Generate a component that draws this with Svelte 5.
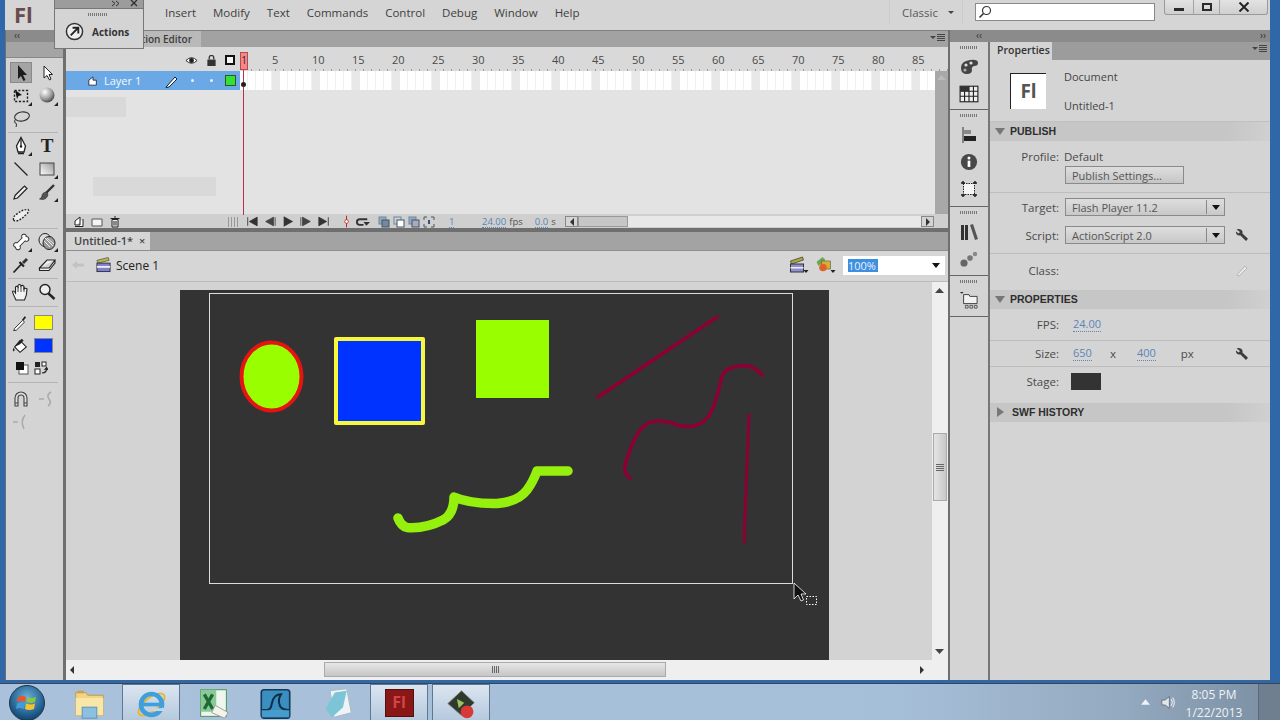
<script>
  const menus = ['Insert', 'Modify', 'Text', 'Commands', 'Control', 'Debug', 'Window', 'Help'];
  const labels = [5, 10, 15, 20, 25, 30, 35, 40, 45, 50, 55, 60, 65, 70, 75, 80, 85];
</script>

{#snippet wrench()}
  <svg class="wrench" viewBox="0 0 14 14"><path d="M1.5 1.5 Q5 0 7 2.5 Q8 4 7.4 5.4 L13 10.8 L11 13 L5.4 7.4 Q3 8 1.6 6.2 Q.6 4.6 1 3.6 L3.6 5.4 L5 4 Z" fill="#3c3c3c"/></svg>
{/snippet}

{#snippet grip()}
  <div class="grip"></div>
{/snippet}

<div class="screen">
  <div class="window">
    <header class="menubar">
      <span class="logo">Fl</span>
      <nav class="menus">
        {#each menus as m}<span>{m}</span>{/each}
      </nav>
      <div class="workspace"><span>Classic</span><i class="caret"></i></div>
      <div class="search">
        <svg viewBox="0 0 14 14"><circle cx="8.5" cy="5.5" r="4" fill="none" stroke="#333" stroke-width="1.2"/><path d="M5.5 8.5 L1.5 12.5" stroke="#333" stroke-width="1.6"/></svg>
      </div>
      <div class="winbtns">
        <span class="wb w1"><i class="min"></i></span>
        <span class="wb w2"><i class="max"></i></span>
        <span class="wb close">
          <svg viewBox="0 0 12 10"><path d="M1.5 .5 L10.5 9.5 M10.5 .5 L1.5 9.5" stroke="#222" stroke-width="2"/></svg>
        </span>
      </div>
    </header>

    <div class="body">
      <aside class="tools">
        <div class="dockbar"><span class="chev">‹‹</span></div>
        <div class="toolhead"></div>
        <div class="toolgrid">
          <span class="tool on"><svg viewBox="0 0 20 20"><path d="M7 2 V16 L10 13 L12.5 18 L14.5 17 L12 12 H16 Z" fill="#1c1c1c"/></svg></span>
          <span class="tool"><svg viewBox="0 0 20 20"><path d="M7 3 V15 L10 12.5 L12.5 17 L14 16 L12 11.5 H15.5 Z" fill="#fff" stroke="#222"/></svg></span>
          <span class="tool more"><svg viewBox="0 0 20 20"><rect x="3.5" y="4.5" width="13" height="11" fill="none" stroke="#222" stroke-width="1.4" stroke-dasharray="2.2 1.6"/><path d="M4 4 L11 9 L7.5 10 L6 13 Z" fill="#111"/></svg></span>
          <span class="tool more"><svg viewBox="0 0 20 20"><defs><radialGradient id="sph" cx=".35" cy=".3" r=".8"><stop offset="0" stop-color="#fff"/><stop offset=".6" stop-color="#999"/><stop offset="1" stop-color="#333"/></radialGradient></defs><circle cx="10" cy="9" r="7.5" fill="url(#sph)"/></svg></span>
          <span class="tool"><svg viewBox="0 0 20 20"><ellipse cx="11" cy="7.5" rx="7.5" ry="4.5" fill="none" stroke="#333" stroke-width="1.1" transform="rotate(-10 11 7.5)"/><path d="M4 11 Q2.5 14 5 14 Q6 16 5 18" fill="none" stroke="#333"/></svg></span>
          <span class="tool"></span>
          <span class="sep"></span>
          <span class="tool more"><svg viewBox="0 0 20 20"><path d="M10 1.5 L14.5 10 L13 16 H7 L5.5 10 Z" fill="#fff" stroke="#222" stroke-width="1.3"/><path d="M10 2 V10 M7 17.5 H13" stroke="#222" stroke-width="1.3"/><circle cx="10" cy="10.5" r="1.2" fill="#222"/></svg></span>
          <span class="tool"><span class="ttool">T</span></span>
          <span class="tool"><svg viewBox="0 0 20 20"><path d="M3.5 3.5 L16.5 16.5" stroke="#222" stroke-width="1.3"/></svg></span>
          <span class="tool more"><svg viewBox="0 0 20 20"><defs><linearGradient id="rc" x1="0" y1="1" x2="1" y2="0"><stop offset="0" stop-color="#fff"/><stop offset="1" stop-color="#999"/></linearGradient></defs><rect x="3" y="4" width="14" height="12" fill="url(#rc)" stroke="#444"/></svg></span>
          <span class="tool"><svg viewBox="0 0 20 20"><path d="M4 13.5 L13.5 4 L16 6.5 L6.5 16 L3 17 Z" fill="#eee" stroke="#222" stroke-width="1.2"/></svg></span>
          <span class="tool more"><svg viewBox="0 0 20 20"><path d="M17 3 L9.5 10.5" stroke="#333" stroke-width="2.4"/><path d="M9.5 10 Q5 10.5 5 14 Q4.5 16.5 2.5 17 Q8 18.5 10 15 Q11.5 13 10.5 11 Z" fill="#555" stroke="#222" stroke-width=".6"/></svg></span>
          <span class="tool"><svg viewBox="0 0 20 20"><path d="M2.5 15 Q2 11 6 9 Q11 4.5 17 4.5 Q19 6 15 9.5 Q11 14 7 15.5 Q4 16.5 2.5 15 Z" fill="#eee" stroke="#222" stroke-width="1.4" stroke-dasharray="1.8 1.4"/></svg></span>
          <span class="tool"></span>
          <span class="sep"></span>
          <span class="tool more"><svg viewBox="0 0 20 20"><path d="M6 14 L14 6" stroke="#222" stroke-width="5"/><circle cx="5" cy="13" r="2.4" fill="#fff" stroke="#222"/><circle cx="7" cy="15.5" r="2.4" fill="#fff" stroke="#222"/><circle cx="13" cy="4.5" r="2.4" fill="#fff" stroke="#222"/><circle cx="15.5" cy="7" r="2.4" fill="#fff" stroke="#222"/><path d="M5 15 L15 5" stroke="#fff" stroke-width="3.4"/></svg></span>
          <span class="tool more"><svg viewBox="0 0 20 20"><ellipse cx="8" cy="8" rx="6" ry="6.5" fill="#ddd" stroke="#222"/><ellipse cx="12" cy="11" rx="6" ry="6.5" fill="#999" stroke="#222"/><path d="M8 6 L16 14 M7 9 L13 15 M10 6 L17 12" stroke="#eee"/></svg></span>
          <span class="tool"><svg viewBox="0 0 20 20"><path d="M2.5 17.5 L11 8.5" stroke="#222" stroke-width="1.8"/><path d="M8.5 7 L13 11.5" stroke="#222" stroke-width="2.2"/><path d="M11 7 L15 3 L17 5 L13 9 Z" fill="#333"/></svg></span>
          <span class="tool"><svg viewBox="0 0 20 20"><path d="M2.5 13 L10 5 H18 L12 13 Z M2.5 13 V15.5 H12 L18 8 V5" fill="#eee" stroke="#222" stroke-width="1.1"/></svg></span>
          <span class="sep"></span>
          <span class="tool"><svg viewBox="0 0 20 20"><path d="M5 18 Q2 12 1.5 9.5 Q2.5 8 4.5 11 V5 Q6 3.5 7 5 V3.5 Q8.5 1.5 10 3.5 V4 Q11.5 2.5 13 4.5 V7 Q14.5 5.5 16 7 Q16 13 13.5 18 Z" fill="#f2f2f2" stroke="#222" stroke-width="1.1"/><path d="M7 5 V10 M10 4 V10 M13 5 V10" stroke="#222" stroke-width=".8"/></svg></span>
          <span class="tool"><svg viewBox="0 0 20 20"><circle cx="8" cy="7.5" r="5" fill="#eee" stroke="#222" stroke-width="1.4"/><path d="M11.5 11.5 L17.5 17" stroke="#222" stroke-width="2.4"/></svg></span>
          <span class="sep tall"></span>
          <span class="tool color"><svg class="mini" viewBox="0 0 20 20"><path d="M4 16 L13 7 L15 9 L6 18 L3 18.5 Z" fill="#fff" stroke="#222"/><path d="M13 7 L16 3" stroke="#222" stroke-width="2"/></svg><b class="swatch yellow"></b></span>
          <span class="tool color"><svg class="mini" viewBox="0 0 20 20"><path d="M10 4 L17 11 L10 17 L4 11 Z" fill="#fff" stroke="#222" stroke-width="1.2"/><path d="M4 11 L10 4 L12 2 L14 4 L10 8" fill="#222"/><path d="M3 12 Q1 15 3 16 Q5 15 3 12" fill="#222"/></svg><b class="swatch blue"></b></span>
          <span class="colorbtns">
            <svg viewBox="0 0 14 14"><rect x="4" y="4" width="9" height="9" fill="#fff" stroke="#555"/><rect x="1" y="1" width="8" height="8" fill="#111"/></svg>
            <svg viewBox="0 0 14 14"><rect x="1" y="1" width="5" height="5" fill="#222"/><rect x="1" y="8" width="5" height="5" fill="#fff" stroke="#222"/><rect x="8" y="1" width="4" height="4" fill="#fff" stroke="#222"/><path d="M8 12 Q13 12 12.5 7 M10.5 9 L12.5 6.5 L14 9" fill="none" stroke="#222" stroke-width="1.2"/></svg>
          </span>
          <span class="sep tall"></span>
          <span class="tool"><svg viewBox="0 0 20 20"><path d="M4 17 V9 A6 6 0 0 1 16 9 V17 H13 V9 A3 3 0 0 0 7 9 V17 Z" fill="#ddd" stroke="#444" stroke-width="1.1"/><path d="M4 14 H7 M13 14 H16" stroke="#444"/></svg></span>
          <span class="tool"><svg viewBox="0 0 20 20"><path d="M2 10 H7 M14 3 Q9 6 12 10 Q15 14 11 17" fill="none" stroke="#aaa" stroke-width="1.6"/></svg></span>
          <span class="tool"><svg viewBox="0 0 20 20"><path d="M2 10 H7 M14 3 Q9 9 13 17" fill="none" stroke="#aaa" stroke-width="1.6"/></svg></span>
        </div>
      </aside>

      <main class="center">
        <section class="timeline">
          <div class="panelbar">
            <span class="ptab">tion Editor</span>
            <span class="pmenu"><i class="caret small"></i><i class="lines"></i></span>
          </div>
          <div class="ruler">
            <div class="ruler-left">
              <svg viewBox="0 0 14 10"><path d="M1 5 Q7 -1 13 5 Q7 11 1 5 Z" fill="#fff" stroke="#222"/><circle cx="7" cy="5" r="2.6" fill="#222"/></svg>
              <svg viewBox="0 0 14 12"><rect x="2.5" y="5" width="9" height="7" fill="#333"/><path d="M4.5 5 V3 A2.5 2.5 0 0 1 9.5 3 V5" fill="none" stroke="#333" stroke-width="1.4"/></svg>
              <i class="outline"></i>
            </div>
            <div class="ruler-track">
              {#each labels as n}<span>{n}</span>{/each}
            </div>
          </div>
          <div class="layers">
            <div class="rows">
              <div class="layer">
                <div class="layer-info">
                  <svg class="lyicon" viewBox="0 0 12 12"><path d="M1 5 L6 1 V5 H10 V11 H1 Z" fill="#fff" stroke="#223"/></svg>
                  <span class="lyname">Layer 1</span>
                  <svg class="lypen" viewBox="0 0 14 14"><path d="M2 12 L10 3 L12 5 L4 13 L1 13.5 Z" fill="#fff" stroke="#123"/></svg>
                  <i class="dot d1"></i><i class="dot d2"></i>
                  <i class="lygreen"></i>
                </div>
                <div class="frames"></div>
              </div>
              <div class="blank">
                <div class="ghost g1"></div>
                <div class="ghost g2"></div>
              </div>
            </div>
            <div class="vscroll tl">
              <svg class="sarrow" viewBox="0 0 9 5"><path d="M4.5 0 L9 5 H0 Z" fill="#bbb"/></svg>
            </div>
          </div>
          <div class="tlbar">
            <div class="tlbar-left">
              <svg viewBox="0 0 12 12"><path d="M2 5 L7 1 V9 H2 Z M2 10.5 H10 V3" fill="#fff" stroke="#222"/></svg>
              <svg viewBox="0 0 12 12"><path d="M1 3 H11 V10 H1 Z" fill="#f4f4f4" stroke="#555"/></svg>
              <svg viewBox="0 0 12 12"><path d="M3 3.5 H9 V11 H3 Z M1.5 2.5 H10.5 M5 1 H7 M5 5 V9.5 M7 5 V9.5" fill="#eee" stroke="#222"/></svg>
            </div>
            <i class="tlgrip"></i>
            <div class="play">
              <svg viewBox="0 0 14 12"><path d="M2 1 V11 M13 1 V11 L4 6 Z" fill="#333" stroke="#333"/></svg>
              <svg viewBox="0 0 14 12"><path d="M11 1 V11 L2 6 Z M13 1 V11" fill="#444" stroke="#444"/></svg>
              <svg viewBox="0 0 14 12"><path d="M2 0 V12 L13 6 Z" fill="#333"/></svg>
              <svg viewBox="0 0 14 12"><path d="M3 1 V11 L12 6 Z M1 1 V11" fill="#444" stroke="#444"/></svg>
              <svg viewBox="0 0 14 12"><path d="M1 1 V11 L10 6 Z M12 1 V11" fill="#333" stroke="#333"/></svg>
            </div>
            <div class="onion">
              <svg class="redmark" viewBox="0 0 6 14"><path d="M3 0 V14" stroke="#c22" stroke-width="1.2"/><circle cx="3" cy="7" r="2.2" fill="#fff" stroke="#c22"/></svg>
              <svg class="loop" viewBox="0 0 16 10"><path d="M12 2 H4 Q1 2 1 5 Q1 8 4 8 H8" fill="none" stroke="#333" stroke-width="2"/><path d="M8 5 L15 5 L11 9 Z" fill="#333"/></svg>
              <svg viewBox="0 0 12 12"><rect x="1" y="1" width="7" height="7" fill="#9ab" stroke="#68a"/><rect x="4" y="4" width="7" height="7" fill="#789" stroke="#456"/></svg>
              <svg viewBox="0 0 12 12"><rect x="1" y="1" width="7" height="7" fill="none" stroke="#68a"/><rect x="4" y="4" width="7" height="7" fill="#fff" stroke="#456"/></svg>
              <svg viewBox="0 0 12 12"><rect x="1" y="1" width="7" height="7" fill="#9ab" stroke="#68a"/><rect x="4" y="4" width="7" height="7" fill="#aab" stroke="#456"/></svg>
              <svg viewBox="0 0 12 12"><path d="M1 4 V1 H4 M8 1 H11 V4 M11 8 V11 H8 M4 11 H1 V8" fill="none" stroke="#456"/><rect x="5" y="4" width="2" height="4" fill="#357"/></svg>
            </div>
            <span class="val frame">1</span>
            <span class="val fps">24.00</span><span class="unit">fps</span>
            <span class="val sec">0.0</span><span class="unit">s</span>
            <div class="hs mini-hs">
              <b class="hs-btn"><i class="tri left"></i></b>
              <b class="mini-thumb"></b>
              <b class="hs-btn end"><i class="tri right"></i></b>
            </div>
          </div>
          <div class="playhead"><span>1</span></div>
          <div class="playline"></div>
          <div class="playdot"></div>
        </section>

        <section class="document">
          <div class="doctabs">
            <div class="doctab">Untitled-1* <i>×</i></div>
          </div>
          <div class="scenebar">
            <svg class="back" viewBox="0 0 12 10"><path d="M0 5 L5 1 V3.5 H12 V6.5 H5 V9 Z" fill="#c2c2c2"/></svg>
            <svg class="clap" viewBox="0 0 16 16"><path d="M1 3 L13 0 L14 3 L2 6 Z" fill="#b9b94c" stroke="#444" stroke-width=".7"/><rect x="1" y="6" width="14" height="9" fill="#7f7fd0" stroke="#333"/><rect x="1" y="9" width="14" height="2" fill="#eee"/></svg>
            <span class="scene">Scene 1</span>
            <div class="sceneright">
              <svg class="sicon" viewBox="0 0 20 18"><path d="M2 5 L14 1 L15 4 L3 8 Z" fill="#a8a83c" stroke="#333" stroke-width=".7"/><rect x="2" y="8" width="13" height="8" fill="#8f8fd0" stroke="#333"/><rect x="2" y="11" width="13" height="1.5" fill="#eee"/><path d="M15 14 H20 L17.5 17 Z" fill="#222"/></svg>
              <svg class="sicon" viewBox="0 0 20 18"><path d="M1 6 L7 1 L10 4 L3 10 Z" fill="#6aa84f"/><rect x="6" y="5" width="9" height="8" fill="#d8b030" stroke="#555" stroke-width=".6"/><circle cx="7.5" cy="11.5" r="3.8" fill="#e0622a"/><path d="M15 14 H20 L17.5 17 Z" fill="#222"/></svg>
              <div class="zoom"><span>100%</span><i class="caret dark"></i></div>
            </div>
          </div>
          <div class="stagewrap">
            <div class="stagearea">
              <div class="pasteboard">
                <svg class="art" viewBox="180 290 649 370">
                  <rect x="209.5" y="293.5" width="583" height="290" fill="none" stroke="#dcdcdc" stroke-width="1"/>
                  <ellipse cx="271.5" cy="376.5" rx="30" ry="34" fill="#99ff00" stroke="#e61410" stroke-width="4"/>
                  <rect x="336" y="339" width="87" height="84" fill="#0033ff" stroke="#f8f83a" stroke-width="4" stroke-linejoin="round"/>
                  <rect x="476" y="320" width="73" height="78" fill="#99ff00"/>
                  <path d="M398 518 Q401 526 407 527.5 Q425 529 443 520 Q454 514 454 497 Q470 504 497 503.5 Q518 502 527 490 Q533 482 537 471 H568" fill="none" stroke="#96f00e" stroke-width="9.5" stroke-linecap="round" stroke-linejoin="round"/>
                  <g fill="none" stroke="#8c0033" stroke-width="3.6" stroke-linecap="round" stroke-linejoin="round">
                    <path d="M598 397 L717 317"/>
                    <path d="M630 478 Q624 474 625 466 Q630 445 640 430 Q648 421 657 421 Q668 421 677 425 Q690 428 697 425 Q708 422 714 405 Q719 391 722 376 Q726 367 740 366 Q755 365 762 375"/>
                    <path d="M749 415 L744 542" stroke-width="3"/>
                  </g>
                </svg>
              </div>
              <svg class="cursor" viewBox="0 0 26 24">
                <path d="M1 1 V17 L5 13 L8 19 L10.5 18 L8 12 H13 Z" fill="#111" stroke="#fff" stroke-width=".8"/>
                <rect x="13.5" y="14.5" width="10" height="8" fill="none" stroke="#fff" stroke-dasharray="1.5 1.5"/>
              </svg>
            </div>
            <div class="vscroll stage">
              <svg class="sarrow up" viewBox="0 0 9 5"><path d="M4.5 0 L9 5 H0 Z" fill="#444"/></svg>
              <div class="vthumb"><i></i></div>
              <svg class="sarrow down" viewBox="0 0 9 5"><path d="M0 0 H9 L4.5 5 Z" fill="#444"/></svg>
            </div>
          </div>
          <div class="hscroll">
            <i class="tri left"></i>
            <div class="hthumb"><i></i></div>
            <i class="tri right"></i>
          </div>
        </section>
      </main>

      <aside class="dock">
        <div class="dockbar wide"><span class="chev c1">‹‹</span><span class="chev c2">››</span></div>
        <div class="dockrow">
          <div class="strip">
            <div class="sgroup g68">
              {@render grip()}
              <svg class="dk" viewBox="0 0 20 18"><path d="M2 10 Q2 3 11 2 Q19 1 19 5 Q19 8 15 8 Q12 9 13 12 Q13 16 8 16 Q2 16 2 10 Z" fill="#444"/><circle cx="7" cy="7" r="1.6" fill="#ddd"/><circle cx="12" cy="5" r="1.6" fill="#ddd"/><circle cx="6" cy="12" r="1.6" fill="#aaa"/></svg>
              <svg class="dk" viewBox="0 0 18 16"><rect x="1" y="1" width="16" height="14" fill="#eee" stroke="#222"/><path d="M1 5.5 H17 M1 10 H17 M5 1 V15 M9 1 V15 M13 1 V15" stroke="#222" stroke-width="1"/><rect x="1" y="1" width="8" height="4.5" fill="#333"/></svg>
            </div>
            <div class="sgroup g97">
              {@render grip()}
              <svg class="dk" viewBox="0 0 18 18"><path d="M3 1 V17" stroke="#333"/><rect x="4" y="4" width="7" height="4" fill="#888"/><rect x="4" y="10" width="12" height="5" fill="#222"/></svg>
              <svg class="dk info" viewBox="0 0 20 20"><circle cx="10" cy="10" r="9" fill="#484848"/><circle cx="10" cy="5.5" r="1.7" fill="#fff"/><rect x="8.5" y="8.5" width="3" height="7" fill="#fff"/></svg>
              <svg class="dk" viewBox="0 0 18 18"><rect x="3.5" y="3.5" width="11" height="11" fill="#f4f4f4" stroke="#222" stroke-dasharray="1.5 1"/><path d="M1 3 H5 M13 3 H17 M1 15 H5 M13 15 H17 M3 1 V4 M15 1 V4 M3 14 V17 M15 14 V17" stroke="#222" stroke-width="1.5"/></svg>
            </div>
            <div class="sgroup g69">
              {@render grip()}
              <svg class="dk" viewBox="0 0 20 18"><path d="M2 2 H5 V17 H2 Z M6 2 H9 V17 H6 Z" fill="#333"/><path d="M11 2 L14 1 L19 16 L16 17 Z" fill="#555"/></svg>
              <svg class="dk" viewBox="0 0 20 18"><circle cx="5" cy="13" r="3.6" fill="#666"/><circle cx="11" cy="8" r="2.8" fill="#777"/><circle cx="16" cy="4" r="2.2" fill="#888"/></svg>
            </div>
            <div class="sgroup g41">
              {@render grip()}
              <svg class="dk" viewBox="0 0 22 20"><path d="M1 1 H5 L3 3 Z" fill="#222"/><path d="M5 4 H11 L12 6 H20 V14 H5 Z" fill="#f2f2f2" stroke="#333"/><path d="M7 16 H10 V19 H7 Z M12 16 H15 V19 H12 Z M17 16 H20 V19 H17 Z" fill="none" stroke="#333" stroke-width=".8"/></svg>
            </div>
          </div>
          <div class="props">
            <div class="tabrow">
              <span class="ptitle">Properties</span>
              <span class="pmenu"><i class="caret small"></i><i class="lines"></i></span>
            </div>
            <div class="docinfo">
              <div class="docicon"><span>Fl</span></div>
              <div class="docnames"><span>Document</span><span>Untitled-1</span></div>
            </div>

            <div class="head"><i class="open"></i>PUBLISH</div>
            <div class="group g-pub">
              <div class="row r18"><label>Profile:</label><span>Default</span></div>
              <button class="btn">Publish Settings...</button>
            </div>
            <div class="group g-tgt">
              <div class="row r28"><label>Target:</label><div class="select"><span>Flash Player 11.2</span><b><i class="caret dark"></i></b></div></div>
              <div class="row r28"><label>Script:</label><div class="select"><span>ActionScript 2.0</span><b><i class="caret dark"></i></b></div>{@render wrench()}</div>
            </div>
            <div class="g-class">
              <div class="row r32"><label>Class:</label>
                <svg class="fadepen" viewBox="0 0 14 14"><path d="M2 12 L10 3 L12 5 L4 13 Z" fill="#ececec" stroke="#b4b4b4"/></svg>
              </div>
            </div>

            <div class="head"><i class="open"></i>PROPERTIES</div>
            <div class="group"><div class="row r31"><label>FPS:</label><span class="link">24.00</span></div></div>
            <div class="group"><div class="row r25"><label>Size:</label><span class="link">650</span><span class="x">x</span><span class="link second">400</span><span class="px">px</span>{@render wrench()}</div></div>
            <div class="g-stage"><div class="row r28"><label>Stage:</label><i class="stagecolor"></i></div></div>

            <div class="head"><i class="closed"></i>SWF HISTORY</div>
          </div>
        </div>
      </aside>
    </div>

    <div class="actions">
      <div class="actions-bar">
        <svg viewBox="0 0 10 7"><path d="M1 1 L4 3.5 L1 6 M5 1 L8 3.5 L5 6" fill="none" stroke="#333"/></svg>
        <svg viewBox="0 0 10 7"><path d="M2 0 L8 6 M8 0 L2 6" stroke="#333" stroke-width="1.4"/></svg>
      </div>
      <div class="agrip"></div>
      <div class="actions-item">
        <svg viewBox="0 0 20 20"><circle cx="10" cy="10" r="8.5" fill="#eee" stroke="#333" stroke-width="1.6"/><path d="M6 14 L13 7 M8 6 H14 V12" fill="none" stroke="#222" stroke-width="2"/></svg>
        <span>Actions</span>
      </div>
    </div>
  </div>

  <footer class="taskbar">
    <div class="orb">
      <svg viewBox="0 0 36 36">
        <defs><radialGradient id="orbg" cx=".5" cy=".35" r=".7"><stop offset="0" stop-color="#6fb0d8"/><stop offset=".7" stop-color="#1f5e8e"/><stop offset="1" stop-color="#0c3a5c"/></radialGradient></defs>
        <circle cx="18" cy="18" r="17.5" fill="url(#orbg)" stroke="#234"/>
        <path d="M9 12 Q13 10 17 12 L16 17 Q12 15 8 17 Z" fill="#e8562a"/>
        <path d="M18.5 12 Q23 14 27 12 L26 17 Q22 19 17.5 17 Z" fill="#8dc63f"/>
        <path d="M8 18.5 Q12 16.5 16 18.5 L15 24 Q11 22 7 24 Z" fill="#3f9ed8"/>
        <path d="M17 18.5 Q22 20.5 26 18.5 L25 24 Q20 26 16 24 Z" fill="#f4c430"/>
      </svg>
    </div>
    <div class="tb"><svg viewBox="0 0 36 36"><path d="M3 6 H14 L16 9 H33 V31 H3 Z" fill="#f2d57e" stroke="#b89b50"/><path d="M5 4 H12 V7 H5 Z" fill="#c9a25a"/><rect x="3" y="12" width="30" height="19" fill="#f8e7a8"/><rect x="10" y="22" width="16" height="12" fill="#8cc0e0" stroke="#5a90b0"/></svg></div>
    <div class="tb active"><svg viewBox="0 0 36 36"><ellipse cx="18" cy="18" rx="17" ry="7.5" fill="none" stroke="#e8b830" stroke-width="2.2" transform="rotate(-38 18 18)"/><circle cx="18" cy="18" r="11.5" fill="none" stroke="#3f9fdc" stroke-width="5"/><rect x="8" y="16" width="20" height="4" fill="#3f9fdc"/><path d="M29 22 H18 V25 H34 L30 21 Z" fill="#c6d6e6"/></svg></div>
    <div class="tb"><svg viewBox="0 0 36 36"><rect x="4" y="3" width="28" height="29" fill="#eef6ee" stroke="#3d8f50"/><rect x="4" y="3" width="17" height="24" fill="#8cc898"/><path d="M8 8 L17 24 M17 8 L8 24" stroke="#1d6b33" stroke-width="3.6"/><path d="M20 20 L34 28 L30 34 L16 28 Z" fill="#f4f4ea" stroke="#999"/></svg></div>
    <div class="tb"><svg viewBox="0 0 36 36"><rect x="2.5" y="3" width="31" height="31" rx="3" fill="#3a8fc0" stroke="#123a58" stroke-width="1.8"/><path d="M3 25 H9 Q13 25 14 18 Q16 8 24 8 Q20 14 23 21 Q25 25 33 25" fill="none" stroke="#0f2e48" stroke-width="2.2"/><rect x="3" y="25" width="30" height="8" fill="#4aa3d3" opacity=".7"/></svg></div>
    <div class="tb"><svg viewBox="0 0 36 36"><path d="M10 4 L28 2 L33 28 L14 33 Z" fill="#eef4f6" stroke="#a8b8c0"/><path d="M5 24 L15 6 L28 4 L24 22 L12 33 Z" fill="#7cc4d6"/></svg></div>
    <div class="tb active fl"><div class="flbox"><span>Fl</span></div></div>
    <div class="tb active"><svg viewBox="0 0 36 36"><path d="M3 17 L18 3 L32 16 L18 30 Z" fill="#2e3a2e" stroke="#8a8a8a"/><path d="M13 12 L21 16 L15 22 Z" fill="#9fc060"/><circle cx="24" cy="26" r="7" fill="#d83838"/></svg></div>
    <div class="tray">
      <svg class="uparrow" viewBox="0 0 10 6"><path d="M5 0 L10 6 H0 Z" fill="#eef2f6"/></svg>
      <svg class="speaker" viewBox="0 0 18 16"><path d="M1 5 H5 L10 1 V15 L5 11 H1 Z" fill="#dfe6ec" stroke="#667"/><path d="M12 4 Q15 8 12 12 M14 2 Q18 8 14 14" fill="none" stroke="#e6ecf2" stroke-width="1.3"/></svg>
      <div class="clock"><span>8:05 PM</span><span>1/22/2013</span></div>
      <div class="showdesk"></div>
    </div>
  </footer>
</div>

<style>
  :global(body) {
    margin: 0;
    background: #2f67a8;
  }
  .screen {
    position: relative;
    width: 1280px;
    height: 720px;
    overflow: hidden;
    display: flex;
    flex-direction: column;
    font-family: "Open Sans", "Liberation Sans", sans-serif;
    font-size: 12px;
    color: #4a4a4a;
  }
  svg {
    display: block;
  }
  i {
    display: block;
    font-style: normal;
  }

  /* window frame */
  .window {
    position: relative;
    box-sizing: border-box;
    height: 684px;
    padding: 0 10px 3px 5px;
    background: #2f67a8;
    display: flex;
    flex-direction: column;
    border-bottom: 1px solid #3a4652;
  }
  .menubar {
    height: 30px;
    flex: none;
    display: flex;
    align-items: flex-start;
    background: #d5d5d5;
    font-size: 11.5px;
    color: #3e3e3e;
  }
  .logo {
    margin: -1px 0 0 9px;
    font-size: 22px;
    font-weight: 700;
    color: #6a4c4c;
    line-height: 30px;
    width: 151px;
  }
  .menus {
    display: flex;
    gap: 17px;
    line-height: 26px;
    width: 724px;
  }
  .workspace {
    box-sizing: border-box;
    display: flex;
    align-items: center;
    height: 24px;
    width: 74px;
    padding-left: 12px;
    border-left: 1px solid #cbcbcb;
    border-right: 1px solid #cbcbcb;
    gap: 10px;
    color: #5a5a5a;
    font-size: 11.5px;
  }
  .caret {
    width: 0;
    height: 0;
    border-left: 3px solid transparent;
    border-right: 3px solid transparent;
    border-top: 3px solid #444;
  }
  .caret.dark {
    border-left-width: 4px;
    border-right-width: 4px;
    border-top: 5px solid #111;
  }
  .search {
    box-sizing: border-box;
    margin: 3px 0 0 12px;
    width: 180px;
    height: 18px;
    background: #fff;
    border: 1px solid #8a8a8a;
    padding: 1px 2px;
  }
  .search svg {
    width: 14px;
    height: 14px;
  }
  .winbtns {
    display: flex;
    margin-left: 9px;
    height: 14px;
    border: 1px solid #9a9a9a;
    border-top: none;
    border-radius: 0 0 3px 3px;
    background: linear-gradient(#e2e2e2, #cfcfcf);
  }
  .wb {
    box-sizing: border-box;
    display: flex;
    align-items: center;
    justify-content: center;
    border-right: 1px solid #a4a4a4;
  }
  .w1 { width: 29px; }
  .w2 { width: 26px; }
  .wb.close {
    width: 47px;
    border-right: none;
  }
  .wb.close svg {
    width: 12px;
    height: 10px;
  }
  .min {
    width: 10px;
    height: 3px;
    background: #2a2a2a;
    margin-top: 5px;
  }
  .max {
    box-sizing: border-box;
    width: 10px;
    height: 8px;
    border: 2px solid #2a2a2a;
  }

  .body {
    flex: 1;
    min-height: 0;
    display: flex;
    background: #6f6f6f;
  }
  .dockbar {
    height: 12px;
    background: #8b8b8b;
    color: #333;
    font-size: 10px;
    line-height: 10px;
    position: relative;
  }
  .chev {
    position: absolute;
    top: 0;
    left: 8px;
  }

  /* tool column */
  .tools {
    box-sizing: border-box;
    margin-left: 1px;
    width: 57px;
    flex: none;
    background: #d4d4d4;
  }
  .toolhead {
    height: 15px;
    background: #a4a4a4;
    border-bottom: 1px solid #888;
  }
  .toolgrid {
    display: grid;
    grid-template-columns: 26px 26px;
    grid-auto-rows: auto;
    padding: 3px 0 0 2px;
  }
  .tool {
    position: relative;
    height: 23px;
    display: flex;
    align-items: center;
    justify-content: center;
  }
  .tool svg {
    width: 20px;
    height: 20px;
  }
  .tool.on {
    background: #a4a4a4;
    box-shadow: inset 0 0 0 1px #8a8a8a;
    margin: 1px 2px;
    height: 21px;
  }
  .tool.more::after {
    content: "";
    position: absolute;
    right: 2px;
    bottom: 1px;
    border-left: 4px solid transparent;
    border-bottom: 4px solid #222;
  }
  .ttool {
    font-family: "Liberation Serif", serif;
    font-weight: 700;
    font-size: 19px;
    color: #222;
    line-height: 20px;
  }
  .sep {
    grid-column: 1 / 3;
    box-sizing: border-box;
    height: 4px;
    margin-right: 2px;
    padding-top: 2px;
    background: linear-gradient(#b4b4b4, #b4b4b4) 0 2px / 100% 1px no-repeat;
  }
  .sep.tall {
    height: 8px;
    background-position: 0 3px;
  }
  .tool.color {
    grid-column: 1 / 3;
    justify-content: flex-start;
    padding-left: 2px;
  }
  .tool .mini {
    width: 20px;
    height: 18px;
  }
  .swatch {
    display: block;
    width: 19px;
    height: 15px;
    margin-left: 4px;
    border: 1px solid #888;
    box-sizing: border-box;
  }
  .yellow { background: #ffff00; }
  .blue { background: #0033ff; }
  .colorbtns {
    grid-column: 1 / 3;
    height: 22px;
    display: flex;
    gap: 5px;
    align-items: center;
    justify-content: center;
    padding-right: 6px;
  }
  .colorbtns svg {
    width: 14px;
    height: 14px;
  }

  /* centre column */
  .center {
    width: 882px;
    margin-left: 3px;
    flex: none;
    display: flex;
    flex-direction: column;
    gap: 4px;
  }
  .timeline {
    position: relative;
    height: 198px;
    flex: none;
    display: flex;
    flex-direction: column;
    background: #d9d9d9;
  }
  .panelbar {
    position: relative;
    height: 17px;
    flex: none;
    background: #a2a2a2;
    border-top: 1px solid #808080;
    box-sizing: border-box;
    display: flex;
  }
  .ptab {
    box-sizing: border-box;
    width: 135px;
    height: 16px;
    background: #b9b9b9;
    padding-right: 9px;
    text-align: right;
    font-size: 10px;
    font-weight: 600;
    line-height: 16px;
    color: #3d3d3d;
  }
  .pmenu {
    position: absolute;
    right: 3px;
    top: 3px;
    display: flex;
    align-items: center;
    gap: 1px;
  }
  .lines {
    width: 8px;
    height: 7px;
    background: repeating-linear-gradient(#444 0 1px, transparent 1px 2px);
  }
  .ruler {
    height: 24px;
    flex: none;
    display: flex;
    background: #d9d9d9;
  }
  .ruler-left {
    position: relative;
    box-sizing: border-box;
    width: 174px;
    flex: none;
    display: flex;
    align-items: center;
    justify-content: flex-end;
    gap: 7px;
    padding: 2px 5px 0 0;
  }
  .ruler-left svg {
    width: 13px;
    height: 11px;
  }
  .outline {
    box-sizing: border-box;
    width: 10px;
    height: 10px;
    border: 2px solid #111;
    background: #f4f4f4;
  }
  .ruler-track {
    flex: 1;
    display: flex;
    padding: 5px 0 0 32px;
    font-size: 11px;
    line-height: 15px;
    color: #4a4a4a;
    background: repeating-linear-gradient(90deg, #9c9c9c 0 1px, transparent 1px 8px) 3px 100% / 100% 2px no-repeat;
    overflow: hidden;
  }
  .ruler-track span {
    width: 40px;
    flex: none;
  }
  .layers {
    flex: 1;
    min-height: 0;
    display: flex;
  }
  .rows {
    flex: 1;
    min-width: 0;
    display: flex;
    flex-direction: column;
  }
  .layer {
    height: 19px;
    flex: none;
    display: flex;
  }
  .layer-info {
    position: relative;
    width: 174px;
    flex: none;
    background: #6aa8e6;
    display: flex;
    align-items: center;
    color: #f4f8fc;
    font-size: 11px;
  }
  .lyicon {
    width: 10px;
    height: 10px;
    margin-left: 22px;
  }
  .lyname {
    margin-left: 6px;
    width: 60px;
  }
  .lypen {
    width: 14px;
    height: 14px;
    margin-left: 1px;
  }
  .dot {
    position: absolute;
    top: 8px;
    width: 3px;
    height: 3px;
    border-radius: 50%;
    background: #e6f2ff;
  }
  .d1 { left: 125px; }
  .d2 { left: 144px; }
  .lygreen {
    position: absolute;
    left: 159px;
    top: 4px;
    box-sizing: border-box;
    width: 11px;
    height: 11px;
    background: #35e035;
    border: 1px solid #2a5a2a;
  }
  .frames {
    flex: 1;
    background:
      repeating-linear-gradient(90deg, transparent 0 32px, #e8e8e8 32px 40px),
      repeating-linear-gradient(90deg, #fff 0 7px, #f0f0f0 7px 8px);
  }
  .blank {
    position: relative;
    flex: 1;
    background: #e3e3e3;
  }
  .ghost {
    position: absolute;
    background: #d9d9d9;
  }
  .g1 {
    left: 0;
    top: 7px;
    width: 60px;
    height: 20px;
  }
  .g2 {
    left: 27px;
    top: 87px;
    width: 123px;
    height: 19px;
  }
  .vscroll.tl {
    box-sizing: border-box;
    width: 13px;
    flex: none;
    background: #a8a8a8;
    padding: 4px 2px;
  }
  .sarrow {
    width: 9px;
    height: 5px;
  }
  .tlbar {
    height: 14px;
    flex: none;
    display: flex;
    align-items: center;
    padding-top: 1px;
    box-sizing: border-box;
    background: #cfcfcf;
    font-size: 9.5px;
  }
  .tlbar svg {
    flex: none;
  }
  .tlbar-left {
    width: 162px;
    flex: none;
    display: flex;
    gap: 6px;
    padding-left: 7px;
    box-sizing: border-box;
  }
  .tlbar-left svg {
    width: 12px;
    height: 12px;
  }
  .tlgrip {
    width: 10px;
    height: 10px;
    margin-right: 8px;
    flex: none;
    background: repeating-linear-gradient(90deg, #999 0 1px, transparent 1px 3px);
  }
  .play {
    display: flex;
    gap: 6px;
    width: 90px;
    flex: none;
  }
  .play svg {
    width: 12px;
    height: 11px;
  }
  .onion {
    display: flex;
    align-items: center;
    gap: 3px;
    width: 113px;
    flex: none;
    padding-left: 8px;
    box-sizing: border-box;
  }
  .onion svg {
    width: 12px;
    height: 12px;
  }
  .onion .redmark {
    width: 5px;
    height: 13px;
    margin-right: 4px;
  }
  .onion .loop {
    width: 15px;
    height: 10px;
    margin-right: 4px;
  }
  .val {
    color: #5a86b8;
    border-bottom: 1px dotted #5a86b8;
    line-height: 11px;
  }
  .val.frame {
    width: 5px;
    margin-right: 28px;
  }
  .val.sec {
    margin-left: 12px;
  }
  .unit {
    margin-left: 3px;
    color: #555;
  }
  .mini-hs {
    position: absolute;
    left: 499px;
    bottom: 1px;
    width: 369px;
    height: 11px;
    display: flex;
    background: #e8e8e8;
    box-sizing: border-box;
  }
  .hs-btn {
    width: 13px;
    background: #d4d4d4;
    border: 1px solid #888;
    box-sizing: border-box;
    display: flex;
    align-items: center;
    justify-content: center;
  }
  .hs-btn.end {
    margin-left: auto;
  }
  .mini-thumb {
    display: block;
    width: 50px;
    background: #c6c6c6;
    border: 1px solid #999;
    box-sizing: border-box;
  }
  .tri.left {
    border-top: 4px solid transparent;
    border-bottom: 4px solid transparent;
    border-right: 4px solid #333;
  }
  .tri.right {
    border-top: 4px solid transparent;
    border-bottom: 4px solid transparent;
    border-left: 4px solid #333;
  }
  .playhead {
    position: absolute;
    left: 174px;
    top: 22px;
    box-sizing: border-box;
    width: 8px;
    height: 18px;
    background: #f08a8a;
    border: 1px solid #b84a4a;
    text-align: center;
    font-size: 10px;
    line-height: 14px;
    color: #4a1a1a;
  }
  .playline {
    position: absolute;
    left: 177px;
    top: 40px;
    width: 1px;
    height: 145px;
    background: #b83245;
  }
  .playdot {
    position: absolute;
    left: 175px;
    top: 52px;
    width: 5px;
    height: 5px;
    border-radius: 50%;
    background: #222;
  }

  /* document */
  .document {
    flex: 1;
    min-height: 0;
    display: flex;
    flex-direction: column;
    background: #d3d3d3;
  }
  .doctabs {
    height: 18px;
    flex: none;
    background: #a3a3a3;
  }
  .doctab {
    width: 84px;
    height: 18px;
    background: #d5d5d5;
    display: flex;
    gap: 6px;
    padding-left: 8px;
    box-sizing: border-box;
    font-size: 11px;
    font-weight: 600;
    line-height: 18px;
    color: #444;
  }
  .scenebar {
    height: 32px;
    flex: none;
    display: flex;
    align-items: center;
    padding-bottom: 2px;
    background: #d6d6d6;
    border-bottom: 1px solid #bcbcbc;
    box-sizing: border-box;
    border-top: 1px solid #8e8e8e;
  }
  .back {
    width: 12px;
    height: 10px;
    margin-left: 6px;
  }
  .clap {
    width: 15px;
    height: 16px;
    margin-left: 12px;
  }
  .scene {
    margin-left: 5px;
    font-size: 12px;
    color: #222;
  }
  .sceneright {
    margin-left: auto;
    display: flex;
    align-items: center;
    gap: 6px;
    padding-right: 3px;
  }
  .sicon {
    width: 21px;
    height: 18px;
  }
  .zoom {
    box-sizing: border-box;
    width: 102px;
    height: 19px;
    margin-left: 1px;
    background: #fff;
    display: flex;
    align-items: center;
    justify-content: space-between;
    padding: 0 5px;
    font-size: 11px;
  }
  .zoom span {
    background: #3f8fe0;
    color: #e8f2fc;
    line-height: 13px;
    padding-right: 2px;
  }
  .stagewrap {
    flex: 1;
    min-height: 0;
    display: flex;
  }
  .stagearea {
    position: relative;
    flex: 1;
    min-width: 0;
    overflow: hidden;
  }
  .pasteboard {
    position: absolute;
    left: 114px;
    top: 8px;
    width: 649px;
    height: 370px;
    background: #333333;
  }
  .art {
    width: 649px;
    height: 370px;
  }
  .cursor {
    position: absolute;
    left: 727px;
    top: 300px;
    width: 26px;
    height: 24px;
  }
  .vscroll.stage {
    position: relative;
    width: 16px;
    flex: none;
    background: #efefef;
  }
  .sarrow.up,
  .sarrow.down {
    position: absolute;
    left: 3px;
  }
  .sarrow.up { top: 6px; }
  .sarrow.down { bottom: 6px; }
  .vthumb {
    position: absolute;
    left: 1px;
    top: 151px;
    width: 14px;
    height: 68px;
    box-sizing: border-box;
    background: linear-gradient(90deg, #e4e4e4, #c8c8c8);
    border: 1px solid #aaa;
    display: flex;
    align-items: center;
    justify-content: center;
  }
  .vthumb i {
    width: 8px;
    height: 7px;
    background: repeating-linear-gradient(#666 0 1px, transparent 1px 2px);
  }
  .hscroll {
    position: relative;
    height: 20px;
    flex: none;
    background: #efefef;
    display: flex;
    align-items: center;
    justify-content: space-between;
    padding: 0 24px 0 4px;
    box-sizing: border-box;
  }
  .hthumb {
    position: absolute;
    left: 258px;
    top: 2px;
    width: 342px;
    height: 15px;
    box-sizing: border-box;
    background: linear-gradient(#e6e6e6, #c6c6c6);
    border: 1px solid #aaa;
    display: flex;
    align-items: center;
    justify-content: center;
  }
  .hthumb i {
    width: 7px;
    height: 7px;
    background: repeating-linear-gradient(90deg, #666 0 1px, transparent 1px 2px);
  }

  /* right dock */
  .dock {
    width: 320px;
    margin-left: 2px;
    flex: none;
    display: flex;
    flex-direction: column;
  }
  .dockbar.wide .c1 { left: 26px; }
  .dockbar.wide .c2 { left: auto; right: 4px; }
  .dockrow {
    flex: 1;
    min-height: 0;
    display: flex;
  }
  .strip {
    width: 38px;
    flex: none;
    background: #d4d4d4;
    border-right: 2px solid #777;
  }
  .sgroup {
    box-sizing: border-box;
    border-bottom: 1px solid #666;
    display: flex;
    flex-direction: column;
    align-items: center;
  }
  .g68 { height: 68px; gap: 9px; }
  .g97 { height: 97px; gap: 9px; }
  .g69 { height: 69px; gap: 9px; }
  .g41 { height: 41px; gap: 8px; }
  .grip {
    margin-top: 4px;
    width: 18px;
    height: 3px;
    background: repeating-linear-gradient(90deg, #777 0 1px, transparent 1px 2px);
  }
  .dk {
    width: 20px;
    height: 18px;
    flex: none;
  }
  .props {
    flex: 1;
    min-width: 0;
    background: #d4d4d4;
    font-size: 11.5px;
  }
  .tabrow {
    position: relative;
    height: 18px;
    background: #9c9c9c;
  }
  .ptitle {
    display: block;
    box-sizing: border-box;
    width: 62px;
    height: 18px;
    background: #d4d4d4;
    padding-left: 7px;
    font-size: 10.5px;
    font-weight: 600;
    line-height: 17px;
    color: #333;
  }
  .docinfo {
    height: 62px;
    box-sizing: border-box;
    display: flex;
    padding: 13px 0 0 20px;
    border-bottom: 1px solid #c0c0c0;
  }
  .docicon {
    box-sizing: border-box;
    width: 36px;
    height: 36px;
    background: #fff;
    border-top: 1px solid #222;
    border-left: 1px solid #222;
    font-weight: 700;
    font-size: 19px;
    color: #555;
    text-align: center;
    line-height: 34px;
  }
  .docnames {
    display: flex;
    flex-direction: column;
    gap: 13px;
    margin: -4px 0 0 18px;
    line-height: 16px;
    font-size: 11px;
    color: #444;
  }
  .head {
    height: 19px;
    box-sizing: border-box;
    display: flex;
    align-items: center;
    gap: 5px;
    padding: 0 0 1px 5px;
    background: linear-gradient(90deg, #c6c6c6 85%, #d0d0d0);
    font-family: "Liberation Sans", sans-serif;
    font-size: 10.5px;
    font-weight: 700;
    color: #2e2e2e;
  }
  .open {
    width: 0;
    height: 0;
    border-left: 5px solid transparent;
    border-right: 5px solid transparent;
    border-top: 7px solid #777;
  }
  .closed {
    width: 0;
    height: 0;
    border-top: 5px solid transparent;
    border-bottom: 5px solid transparent;
    border-left: 7px solid #777;
    margin: 0 3px 0 2px;
  }
  .group {
    border-bottom: 1px solid #bdbdbd;
  }
  .g-pub {
    box-sizing: border-box;
    height: 52px;
    padding-top: 6px;
  }
  .g-tgt {
    box-sizing: border-box;
    height: 61px;
  }
  .g-class {
    height: 36px;
  }
  .g-stage {
    height: 36px;
  }
  .row {
    position: relative;
    display: flex;
    align-items: center;
  }
  .r18 { height: 18px; }
  .r25 { height: 25px; }
  .r28 { height: 28px; }
  .r31 { height: 31px; }
  .r32 { height: 32px; }
  label {
    width: 69px;
    flex: none;
    text-align: right;
    margin-right: 5px;
    color: #4a4a4a;
  }
  .btn {
    display: block;
    box-sizing: border-box;
    margin: 1px 0 0 75px;
    width: 119px;
    height: 18px;
    padding: 0 0 0 6px;
    text-align: left;
    font: inherit;
    font-size: 11px;
    color: #555;
    background: linear-gradient(#dedede, #c6c6c6);
    border: 1px solid #8a8a8a;
  }
  .select {
    box-sizing: border-box;
    margin-left: 1px;
    width: 160px;
    height: 18px;
    display: flex;
    justify-content: space-between;
    align-items: center;
    padding-left: 6px;
    font-size: 11px;
    color: #555;
    background: linear-gradient(#dedede, #c8c8c8);
    border: 1px solid #8a8a8a;
  }
  .select b {
    width: 17px;
    height: 14px;
    border-left: 1px solid #888;
    display: flex;
    align-items: center;
    justify-content: center;
  }
  .wrench {
    position: absolute;
    left: 245px;
    top: 50%;
    margin-top: -7px;
    width: 14px;
    height: 14px;
  }
  .fadepen {
    position: absolute;
    left: 245px;
    top: 9px;
    width: 14px;
    height: 14px;
  }
  .link {
    color: #5a86b8;
    border-bottom: 1px dotted #5a86b8;
    line-height: 14px;
    font-size: 11px;
    margin-left: 9px;
  }
  .link.second {
    margin-left: 0;
  }
  .x {
    margin: 0 21px 0 18px;
  }
  .px {
    margin-left: 25px;
  }
  .stagecolor {
    width: 30px;
    height: 17px;
    margin-left: 7px;
    background: #333;
  }

  /* floating actions panel */
  .actions {
    position: absolute;
    left: 54px;
    top: 0;
    width: 90px;
    height: 49px;
    box-sizing: border-box;
    background: #d4d4d4;
    border: 1px solid #777;
    border-top: none;
    color: #333;
  }
  .actions-bar {
    height: 8px;
    background: #9c9c9c;
    border-bottom: 1px solid #777;
    display: flex;
    justify-content: flex-end;
    gap: 8px;
    padding-right: 4px;
  }
  .actions-bar svg {
    width: 10px;
    height: 7px;
  }
  .agrip {
    margin: 4px auto 0 33px;
    width: 20px;
    height: 3px;
    background: repeating-linear-gradient(90deg, #777 0 1px, transparent 1px 2px);
  }
  .actions-item {
    display: flex;
    align-items: center;
    gap: 8px;
    margin: 6px 0 0 10px;
    font-size: 10px;
    font-weight: 700;
  }
  .actions-item svg {
    width: 19px;
    height: 19px;
    flex: none;
  }

  /* windows taskbar */
  .taskbar {
    position: relative;
    height: 36px;
    flex: none;
    display: flex;
    background: linear-gradient(90deg, #a9c1da 0, #a6bfd8 70%, #93a9bf 88%, #7b8ea2 100%);
  }
  .orb {
    width: 54px;
    flex: none;
    display: flex;
    justify-content: center;
    padding-top: 1px;
    margin-right: 6px;
  }
  .orb svg {
    width: 36px;
    height: 36px;
  }
  .tb {
    box-sizing: border-box;
    width: 58px;
    margin-right: 4px;
    display: flex;
    justify-content: center;
    padding-top: 3px;
    border-left: 1px solid transparent;
    border-right: 1px solid transparent;
    overflow: hidden;
  }
  .tb svg {
    width: 33px;
    height: 33px;
  }
  .tb.active {
    background: linear-gradient(#dbe5f0, #b5c9de);
    border-color: #5d7890;
    border-top: 1px solid #5d7890;
  }
  .flbox {
    box-sizing: border-box;
    width: 29px;
    height: 28px;
    margin-top: 1px;
    background: #8a1616;
    border: 1px solid #521010;
    font-weight: 700;
    font-size: 16px;
    color: #d0454a;
    text-align: center;
    line-height: 25px;
  }
  .tray {
    position: absolute;
    left: 1100px;
    right: 0;
    top: 0;
    bottom: 0;
    display: flex;
    align-items: center;
  }
  .uparrow {
    width: 9px;
    height: 6px;
    margin-left: 41px;
  }
  .speaker {
    width: 15px;
    height: 15px;
    margin-left: 11px;
  }
  .clock {
    width: 84px;
    margin: 3px 0 0 3px;
    display: flex;
    flex-direction: column;
    align-items: center;
    padding-right: 14px;
    box-sizing: border-box;
    color: #eef2f6;
    font-size: 12px;
    line-height: 18px;
  }
  .showdesk {
    position: absolute;
    right: 0;
    top: 0;
    bottom: 0;
    width: 22px;
    background: #6f7f8f;
    border-left: 1px solid #59697a;
    box-sizing: border-box;
  }
</style>
